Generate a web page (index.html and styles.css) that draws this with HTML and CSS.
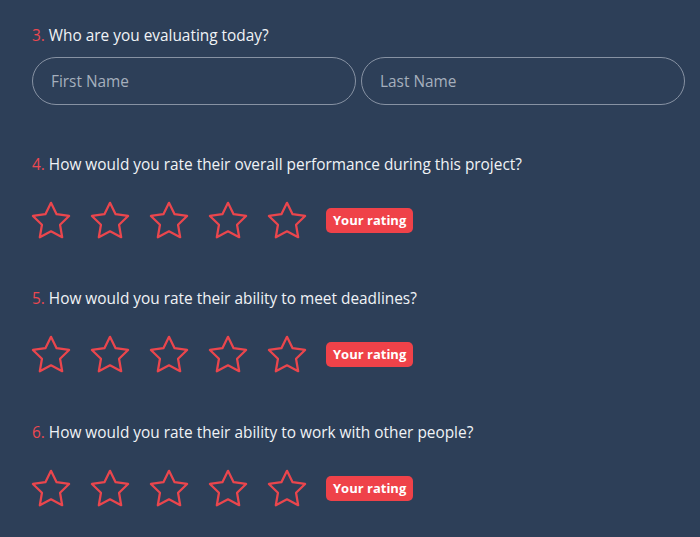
FILE: index.html
```html
<!DOCTYPE html>
<html lang="en">

<head>
  <meta charset="UTF-8">
  <meta name="viewport" content="width=device-width, initial-scale=1.0">
  <title>Evaluation Form</title>
  <link rel="stylesheet" href="styles.css">
</head>

<body>

  <form class="survey">
    <!-- 被评价人姓名 -->
    <div class="question">
      <div class="label"><span class="num">3.</span> Who are you evaluating today?</div>
      <div class="name-row">
        <input class="field" type="text" placeholder="First Name">
        <input class="field" type="text" placeholder="Last Name">
      </div>
    </div>

    <div class="question">
      <div class="label"><span class="num">4.</span> How would you rate their overall performance during this project?</div>
      <div class="rating" data-name="performance"></div>
    </div>

    <div class="question">
      <div class="label"><span class="num">5.</span> How would you rate their ability to meet deadlines?</div>
      <div class="rating" data-name="deadlines"></div>
    </div>

    <div class="question">
      <div class="label"><span class="num">6.</span> How would you rate their ability to work with other people?</div>
      <div class="rating" data-name="teamwork"></div>
    </div>
  </form>

  <script>
    // 星形轮廓
    const starSvg = '<svg class="star" viewBox="1 1 22 21" width="40" height="38">' +
      '<polygon points="12 2 15.09 8.26 22 9.27 17 14.14 18.18 21.02 12 17.77 5.82 21.02 7 14.14 2 9.27 8.91 8.26"/>' +
      '</svg>';

    document.querySelectorAll('.rating').forEach(row => {
      for (let i = 0; i < 5; i++) {
        row.insertAdjacentHTML('beforeend', starSvg);
      }
      const badge = document.createElement('span');
      badge.className = 'badge';
      badge.textContent = 'Your rating';
      row.appendChild(badge);
    });
  </script>

</body>

</html>
```

FILE: styles.css
```css
/* 基本样式设定 */
body {
  font-family: "Open Sans", Arial, sans-serif;
  margin: 0;
  padding: 26px 15px 0 32px;
  background-color: #2d3f58;
  color: #f0f3f6;
}

.question {
  margin-bottom: 50px;
}

.label {
  font-size: 15.4px;
  line-height: 20px;
}

.num {
  color: #ec4850;
}

/* 姓名输入框 */
.name-row {
  display: flex;
  gap: 5px;
  margin-top: 11px;
}

.field {
  flex: 1;
  min-width: 0;
  height: 48px;
  box-sizing: border-box;
  padding: 0 18px;
  border: 1px solid #8792a3;
  border-radius: 24px;
  background: transparent;
  color: #eef1f5;
  font-family: inherit;
  font-size: 15.4px;
  outline: none;
}

.field::placeholder {
  color: #a5afbd;
}

/* 星级评分 */
.rating {
  display: flex;
  align-items: center;
  gap: 19px;
  margin-top: 26px;
  margin-left: -1px;
}

.star {
  display: block;
  fill: none;
  stroke: #ea464d;
  stroke-width: 1.25;
  stroke-linejoin: round;
}

.badge {
  background-color: #ef4249;
  color: #fff;
  font-size: 13px;
  font-weight: 700;
  line-height: 25px;
  padding: 0 7px;
  border-radius: 5px;
}
```
